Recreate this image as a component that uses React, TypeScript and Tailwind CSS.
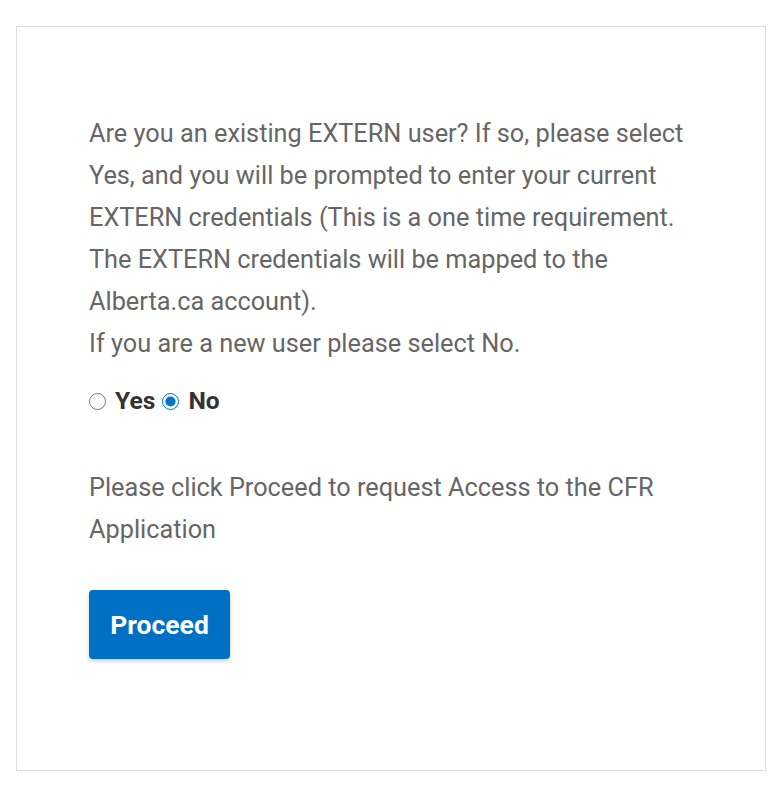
import { useState } from 'react';

export default function App() {
  const [existing, setExisting] = useState<'yes' | 'no'>('no');

  return (
    <div className="min-h-screen bg-white pl-4 pt-[26px] font-['Roboto',sans-serif]">
      <div className="h-[745px] w-[750px] border border-[#dcdcdc] px-[72px] pt-[86px]">
        <p className="text-[25.3px] leading-[42px] text-[#666]">
          Are you an existing EXTERN user? If so, please select Yes, and you will be prompted to enter
          your current EXTERN credentials (This is a one time requirement. The EXTERN credentials will
          be mapped to the Alberta.ca account).
          <br />
          If you are a new user please select No.
        </p>

        <div className="mt-[15px] flex items-center text-[24.6px] font-bold leading-[42px] text-[#333]">
          <label className="flex items-center">
            <input
              type="radio"
              name="existing"
              checked={existing === 'yes'}
              onChange={() => setExisting('yes')}
              className="m-0 mr-[9px] h-[17px] w-[17px] accent-[#0075d0]"
            />
            Yes
          </label>
          <label className="ml-[7px] flex items-center">
            <input
              type="radio"
              name="existing"
              checked={existing === 'no'}
              onChange={() => setExisting('no')}
              className="m-0 mr-[9px] h-[17px] w-[17px] accent-[#0075d0]"
            />
            No
          </label>
        </div>

        <p className="mt-[45px] text-[25.3px] leading-[42px] text-[#666]">
          Please click Proceed to request Access to the CFR Application
        </p>

        <button className="mt-[39px] h-[69px] w-[141px] rounded-[4px] bg-[#0070c4] text-[26.5px] font-bold text-white shadow-[0_2px_4px_rgba(0,0,0,0.2)]">
          Proceed
        </button>
      </div>
    </div>
  );
}
